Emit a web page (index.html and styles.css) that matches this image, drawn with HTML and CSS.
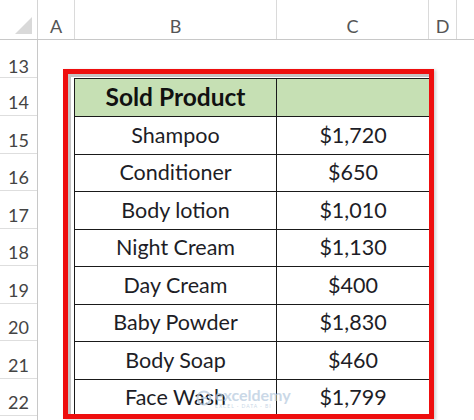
FILE: index.html
```html
<!DOCTYPE html>
<html lang="en">
<head>
<meta charset="utf-8">
<title>Sold Product</title>
<link rel="stylesheet" href="styles.css">
</head>
<body>
<div class="sheet">
  <div class="colhead">
    <div class="corner">
      <svg width="37" height="39" viewBox="0 0 37 39"><polygon points="15,34 32,34 32,17" fill="#d9d9d9"/></svg>
    </div>
    <div class="ch ch-a">A</div>
    <div class="ch ch-b">B</div>
    <div class="ch ch-c">C</div>
    <div class="ch ch-d">D</div>
    <div class="ch ch-rest"></div>
  </div>
  <div class="body">
    <div class="rowhead">
      <div class="rh rh-first">13</div>
      <div class="rh rh-14">14</div>
      <div class="rh">15</div>
      <div class="rh">16</div>
      <div class="rh">17</div>
      <div class="rh">18</div>
      <div class="rh">19</div>
      <div class="rh">20</div>
      <div class="rh">21</div>
      <div class="rh">22</div>
      <div class="rh rh-last"></div>
    </div>
    <div class="content">
      <div class="wrap">
        <div class="tbl">
          <div class="cell head">Sold Product</div>
          <div class="cell head"></div>
          <div class="cell">Shampoo</div><div class="cell">$1,720</div>
          <div class="cell">Conditioner</div><div class="cell">$650</div>
          <div class="cell">Body lotion</div><div class="cell">$1,010</div>
          <div class="cell">Night Cream</div><div class="cell">$1,130</div>
          <div class="cell">Day Cream</div><div class="cell">$400</div>
          <div class="cell">Baby Powder</div><div class="cell">$1,830</div>
          <div class="cell">Body Soap</div><div class="cell">$460</div>
          <div class="cell">Face Wash</div><div class="cell">$1,799</div>
        </div>
        <div class="watermark">
          <svg class="wm-logo" width="16" height="16" viewBox="0 0 16 16"><circle cx="8" cy="8" r="6.5" fill="none" stroke="#b9cce0" stroke-width="2"/><path d="M5 8h6" stroke="#b9cce0" stroke-width="2"/></svg>
          <div class="wm-text">
            <span class="wm-name">exceldemy</span>
            <span class="wm-sub">EXCEL · DATA · BI</span>
          </div>
        </div>
      </div>
    </div>
  </div>
</div>
</body>
</html>
```
FILE: styles.css
```css
* { box-sizing: border-box; }
html, body { margin: 0; padding: 0; background: #fff; }
body { width: 474px; height: 420px; overflow: hidden; font-family: Lato, "Noto Sans", sans-serif; }

.sheet { width: 474px; height: 420px; }

.colhead {
  display: flex;
  height: 40px;
  border-bottom: 1px solid #c8c8c8;
}
.corner { width: 38px; border-right: 1px solid #d4d4d4; flex: none; }
.corner svg { display: block; }
.ch {
  flex: none;
  border-right: 1px solid #dadada;
  color: #555;
  font-size: 18px;
  text-align: center;
  padding-top: 16px;
  line-height: 20px;
}
.ch-a { width: 37px; }
.ch-b { width: 202px; }
.ch-c { width: 152px; }
.ch-d { width: 28px; }
.ch-rest { flex: 1; border-right: none; }

.body { display: flex; }
.rowhead { width: 38px; flex: none; border-right: 1px solid #c8c8c8; height: 380px; overflow: hidden; }
.rh {
  height: 37.5px;
  border-bottom: 1px solid #dedede;
  color: #444;
  font-size: 18px;
  text-align: center;
  display: flex;
  align-items: flex-end;
  justify-content: center;
  padding-bottom: 3px;
  line-height: 20px;
}
.rh-first { height: 38px; padding-bottom: 1px; }
.rh-14 { height: 38px; }
.rh-last { border-bottom: none; }

.content { flex: 1; padding-top: 38px; padding-left: 36px; }
.wrap { position: relative; width: 355px; }
.wrap::after {
  content: "";
  position: absolute;
  left: -11px;
  top: -9px;
  right: -5px;
  bottom: -2px;
  border: 5px solid #ee0e0e;
  box-shadow: inset 3px 3px 0 #c4c4c4, 2px 1px 3px rgba(0,0,0,0.18);
  pointer-events: none;
}

.tbl {
  display: grid;
  grid-template-columns: 202px 153px;
  grid-template-rows: 38px repeat(8, 37.5px);
  border-left: 1px solid #1a1a1a;
  border-top: 1px solid #1a1a1a;
}
.cell {
  border-right: 1px solid #1a1a1a;
  border-bottom: 1px solid #1a1a1a;
  display: flex;
  align-items: center;
  justify-content: center;
  font-size: 21.5px;
  color: #1d1d26;
  line-height: 1;
}
.cell.head {
  background: #c6e0b4;
  font-weight: 700;
  font-size: 24.5px;
  color: #111;
}

.watermark {
  position: absolute;
  left: 122px;
  bottom: 8px;
  display: flex;
  align-items: center;
  gap: 3px;
  opacity: 0.75;
}
.wm-logo { display: block; }
.wm-text { display: flex; flex-direction: column; line-height: 1; }
.wm-name { font-size: 16px; color: #b9cce0; font-weight: 700; }
.wm-sub { font-size: 5px; color: #b9cce0; letter-spacing: 1px; margin-top: 1px; }
```
